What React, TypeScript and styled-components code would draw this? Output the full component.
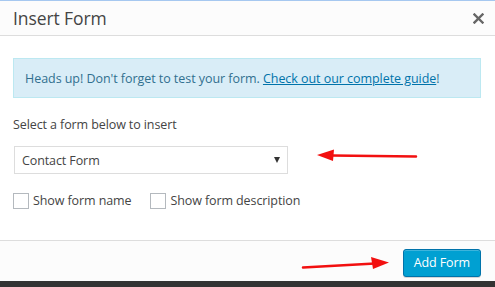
import React from 'react'
import styled, { createGlobalStyle } from 'styled-components'

const GlobalStyle = createGlobalStyle`
  html, body {
    margin: 0;
    padding: 0;
    background: #ffffff;
  }
  body {
    font-family: 'Open Sans', 'Noto Sans', sans-serif;
    color: #333;
  }
`

const Page = styled.div`
  position: relative;
  width: 495px;
  height: 287px;
  overflow: hidden;
  background: #fff;
  border-top: 1px solid #a6c8f0;
  box-sizing: border-box;
  display: flex;
  flex-direction: column;
`

const Header = styled.div`
  height: 34px;
  display: flex;
  align-items: center;
  justify-content: space-between;
  padding: 0 11px 0 13px;
  background: #fcfcfc;
  border-bottom: 1px solid #dddddd;
  flex-shrink: 0;
`

const Title = styled.h1`
  margin: 0;
  font-size: 17.5px;
  font-weight: 400;
  color: #444;
  letter-spacing: -0.1px;
`

const CloseButton = styled.button`
  border: none;
  background: none;
  padding: 0;
  width: 12px;
  height: 12px;
  display: flex;
  align-items: center;
  justify-content: center;
  cursor: pointer;
`

const Body = styled.div`
  flex: 1;
  padding: 22px 14px 0 13px;
  display: flex;
  flex-direction: column;
`

const Notice = styled.div`
  background: #d9edf7;
  border: 1px solid #bce8f1;
  color: #31708f;
  font-size: 12.5px;
  height: 40px;
  box-sizing: border-box;
  display: flex;
  align-items: center;
  padding: 0 11px;
  letter-spacing: -0.05px;

  a {
    color: #0073aa;
    text-decoration: underline;
  }
`

const Label = styled.div`
  margin-top: 18px;
  font-size: 12.5px;
  color: #444;
  letter-spacing: -0.1px;
`

const Select = styled.div`
  margin-top: 13px;
  margin-left: 1px;
  width: 274px;
  height: 28px;
  box-sizing: border-box;
  border: 1px solid #dddddd;
  display: flex;
  align-items: center;
  justify-content: space-between;
  padding: 0 7px 0 7px;
  font-size: 12.5px;
  color: #444;
  letter-spacing: -0.1px;
`

const Caret = styled.span`
  width: 0;
  height: 0;
  border-left: 3.5px solid transparent;
  border-right: 3.5px solid transparent;
  border-top: 6px solid #333;
`

const Options = styled.div`
  margin-top: 18px;
  display: flex;
  gap: 19px;
`

const Option = styled.label`
  display: flex;
  align-items: center;
  gap: 4px;
  font-size: 12.5px;
  color: #444;
  letter-spacing: -0.1px;
`

const Box = styled.span`
  width: 16px;
  height: 16px;
  box-sizing: border-box;
  border: 1px solid #b4b9be;
  background: #fff;
  display: inline-block;
`

const Footer = styled.div`
  height: 40px;
  flex-shrink: 0;
  background: #fcfcfc;
  border-top: 1px solid #dddddd;
  display: flex;
  align-items: center;
  justify-content: flex-end;
  padding-right: 14px;
`

const PrimaryButton = styled.button`
  height: 28px;
  padding: 0 10px;
  background: #00a0d2;
  border: 1px solid #0073aa;
  border-radius: 3px;
  color: #fff;
  font-family: 'Open Sans', 'Noto Sans', sans-serif;
  font-size: 12.5px;
  letter-spacing: -0.1px;
  box-shadow: inset 0 1px 0 rgba(120, 200, 230, 0.5), 0 1px 0 rgba(0, 0, 0, 0.15);
  margin-top: 3px;
`

const BottomBar = styled.div`
  height: 6px;
  background: #333;
  flex-shrink: 0;
`

const Arrow = styled.svg<{ $left: number; $top: number }>`
  position: absolute;
  left: ${p => p.$left}px;
  top: ${p => p.$top}px;
  overflow: visible;
`

export default function App() {
  return (
    <>
      <GlobalStyle />
      <Page>
        <Header>
          <Title>Insert Form</Title>
          <CloseButton aria-label="Close">
            <svg width="11" height="11" viewBox="0 0 11 11">
              <path d="M1.5 1.5 L9.5 9.5 M9.5 1.5 L1.5 9.5" stroke="#666" strokeWidth="2.4" strokeLinecap="square" />
            </svg>
          </CloseButton>
        </Header>
        <Body>
          <Notice>
            <span>
              Heads up! Don't forget to test your form. <a href="#">Check out our complete guide</a>!
            </span>
          </Notice>
          <Label>Select a form below to insert</Label>
          <Select>
            <span>Contact Form</span>
            <Caret />
          </Select>
          <Options>
            <Option>
              <Box />
              Show form name
            </Option>
            <Option>
              <Box />
              Show form description
            </Option>
          </Options>
        </Body>
        <Footer>
          <PrimaryButton>Add Form</PrimaryButton>
        </Footer>
        <BottomBar />

        <Arrow $left={316} $top={147} width="102" height="14" viewBox="0 0 102 14">
          <path d="M16 7.5 L100 8.5" stroke="#f21010" strokeWidth="2.5" strokeLinecap="round" />
          <polygon points="1,7 18,1.5 17,13" fill="#f21010" />
        </Arrow>
        <Arrow $left={301} $top={255} width="90" height="14" viewBox="0 0 90 14">
          <path d="M2 11.5 L74 7.5" stroke="#f21010" strokeWidth="2.5" strokeLinecap="round" />
          <polygon points="88,6.5 70,1 72,13" fill="#f21010" />
        </Arrow>
      </Page>
    </>
  )
}
